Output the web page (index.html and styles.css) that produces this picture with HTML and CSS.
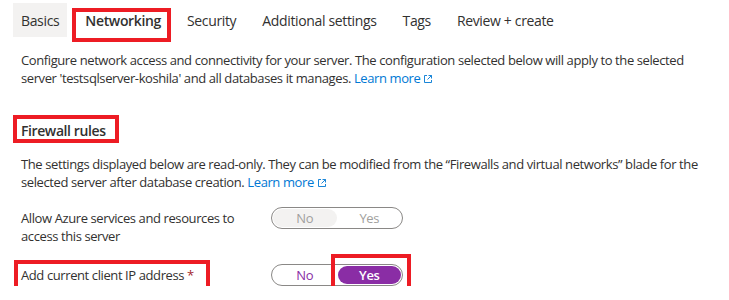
FILE: index.html
```html
<!DOCTYPE html>
<html>
<head>
<meta charset="utf-8">
<link rel="stylesheet" href="styles.css">
</head>
<body>
<div class="page">
  <nav class="tabs">
    <span class="tab tab-basics">Basics</span>
    <span class="tab tab-active mark">Networking</span>
    <span class="tab">Security</span>
    <span class="tab">Additional settings</span>
    <span class="tab">Tags</span>
    <span class="tab">Review + create</span>
  </nav>
  <p class="desc">Configure network access and connectivity for your server. The configuration selected below will apply to the selected<br>server 'testsqlserver-koshila' and all databases it manages. <a class="link">Learn more <svg class="ext" viewBox="0 0 10 10" width="10" height="10"><path d="M4 1.5H1.5v7h7V6M5.5 1.5h3v3M8.5 1.5L4.5 5.5" fill="none" stroke="#0078d4" stroke-width="0.9"/></svg></a></p>
  <h2 class="section"><span class="mark mark-heading">Firewall rules</span></h2>
  <p class="desc desc2">The settings displayed below are read-only. They can be modified from the “Firewalls and virtual networks” blade for the<br>selected server after database creation. <a class="link">Learn more <svg class="ext" viewBox="0 0 10 10" width="10" height="10"><path d="M4 1.5H1.5v7h7V6M5.5 1.5h3v3M8.5 1.5L4.5 5.5" fill="none" stroke="#0078d4" stroke-width="0.9"/></svg></a></p>
  <div class="row row1">
    <div class="label">Allow Azure services and resources to<br>access this server</div>
    <div class="toggle disabled">
      <span class="opt on">No</span>
      <span class="opt">Yes</span>
    </div>
  </div>
  <div class="row row2">
    <div class="label"><span class="mark mark-label">Add current client IP address <span class="req">*</span></span></div>
    <div class="toggle">
      <span class="opt">No</span>
      <span class="opt on mark mark-yes">Yes</span>
    </div>
  </div>
</div>
</body>
</html>
```
FILE: styles.css
```css
body {
  margin: 0;
  background: #ffffff;
  color: #323130;
  font-family: "Segoe UI", "Open Sans", "Noto Sans", sans-serif;
  font-size: 13px;
  letter-spacing: -0.4px;
}
.page {
  padding: 3px 0 0 21px;
}
.tabs {
  display: flex;
  gap: 10px;
  margin-left: -8px;
  height: 34px;
}
.tab {
  display: flex;
  align-items: center;
  padding: 0 8px;
  font-size: 14px;
  letter-spacing: -0.35px;
  color: #323130;
  position: relative;
}
.tab-basics {
  background: #f3f2f1;
}
.tab-active {
  font-weight: 600;
}
.mark {
  position: relative;
}
.mark::after {
  content: "";
  position: absolute;
  border: 4px solid #ed1c24;
  pointer-events: none;
}
.tab-active::after {
  left: -5px;
  right: -2px;
  top: 5px;
  bottom: -5px;
}
.desc {
  margin: 14px 0 0 0;
  line-height: 18px;
  white-space: nowrap;
}
.link {
  color: #0078d4;
}
.ext {
  vertical-align: -1px;
}
.section {
  margin: 34px 0 0 0;
  font-size: 14px;
  font-weight: 600;
  letter-spacing: -0.4px;
  line-height: 20px;
}
.mark-heading::after {
  left: -8px;
  right: -13px;
  top: -6px;
  bottom: -3px;
}
.desc2 {
  margin-top: 14px;
}
.row {
  display: flex;
  align-items: flex-start;
}
.row1 {
  margin-top: 18px;
}
.row1 .toggle {
  margin-top: -2px;
}
.row2 {
  margin-top: 19px;
  align-items: center;
}
.label {
  width: 250px;
  line-height: 18px;
}
.req {
  color: #a4262c;
}
.mark-label::after {
  left: -7px;
  right: -16px;
  top: -6px;
  bottom: -9px;
}
.toggle {
  box-sizing: border-box;
  width: 132px;
  height: 22px;
  border: 1px solid #8a8886;
  border-radius: 11px;
  padding: 1px;
  display: flex;
  gap: 1px;
}
.opt {
  flex: 1;
  display: flex;
  align-items: center;
  justify-content: center;
  border-radius: 9px;
  color: #8a2da5;
  font-size: 13px;
}
.toggle.disabled .opt {
  color: #a19f9d;
}
.toggle .opt.on {
  background: #8a2da5;
  color: #ffffff;
  font-weight: 600;
}
.toggle.disabled .opt.on {
  background: #f3f2f1;
  color: #a19f9d;
  font-weight: 400;
}
.mark-yes::after {
  left: -7px;
  right: -10px;
  top: -12px;
  bottom: -9px;
}
```
